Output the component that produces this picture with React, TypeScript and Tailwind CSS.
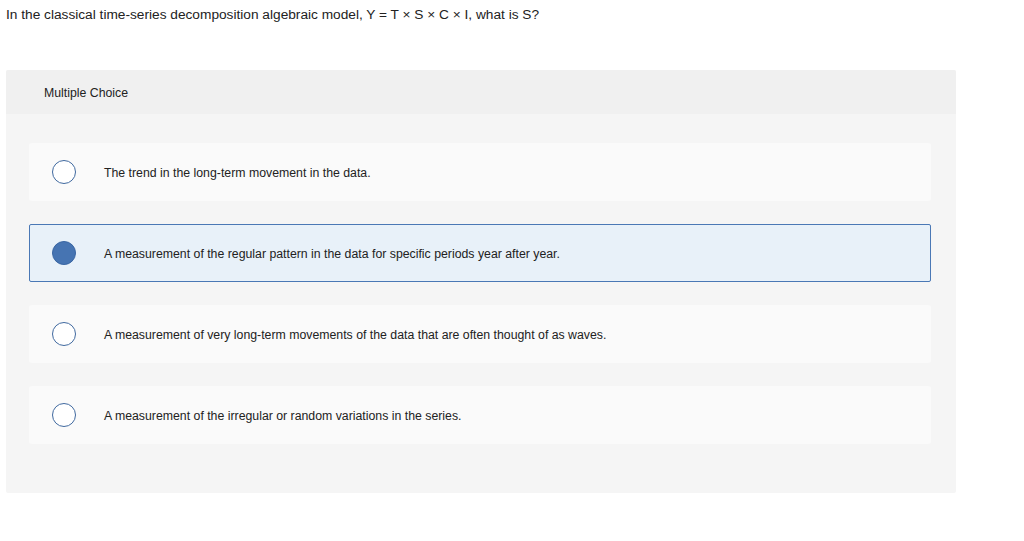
const options = [
  "The trend in the long-term movement in the data.",
  "A measurement of the regular pattern in the data for specific periods year after year.",
  "A measurement of very long-term movements of the data that are often thought of as waves.",
  "A measurement of the irregular or random variations in the series.",
];

const selected = 1;

const Radio = ({ checked }: { checked: boolean }) => (
  <span
    className={
      checked
        ? "w-[24px] h-[24px] rounded-full bg-[#4674b2] border border-[#3a66a3] shrink-0"
        : "w-[24px] h-[24px] rounded-full bg-white border border-[#40699f] shrink-0"
    }
  />
);

const App = () => {
  return (
    <div
      className="w-[1024px] h-[541px] bg-white text-[#222] px-[6px] pt-[7px]"
      style={{ fontFamily: '"Liberation Sans", Arial, sans-serif' }}
    >
      <p className="text-[13.7px] leading-[16px] h-[16px]">
        In the classical time-series decomposition algebraic model, Y = T × S × C × I, what is S?
      </p>

      <section className="mt-[47px] w-[950px] h-[423px] bg-[#f5f5f5] rounded-[2px] overflow-hidden">
        <header className="h-[44px] bg-[#f0f0f0] flex items-center pl-[38px] pt-[2px] text-[12.3px] text-[#222]">
          Multiple Choice
        </header>

        <div className="flex flex-col gap-[23px] pl-[23px] pr-[25px] pt-[29px]">
          {options.map((text, i) => (
            <label
              key={i}
              className={
                i === selected
                  ? "h-[58px] flex items-center gap-[28px] pl-[22px] bg-[#e8f1f9] border border-[#4a78b5] rounded-[2px]"
                  : "h-[58px] flex items-center gap-[28px] pl-[22px] bg-[#fafafa] border border-transparent rounded-[3px]"
              }
            >
              <Radio checked={i === selected} />
              <span className="text-[12.3px] text-[#222] pt-[2px]">{text}</span>
            </label>
          ))}
        </div>
      </section>
    </div>
  );
};

export default App;
